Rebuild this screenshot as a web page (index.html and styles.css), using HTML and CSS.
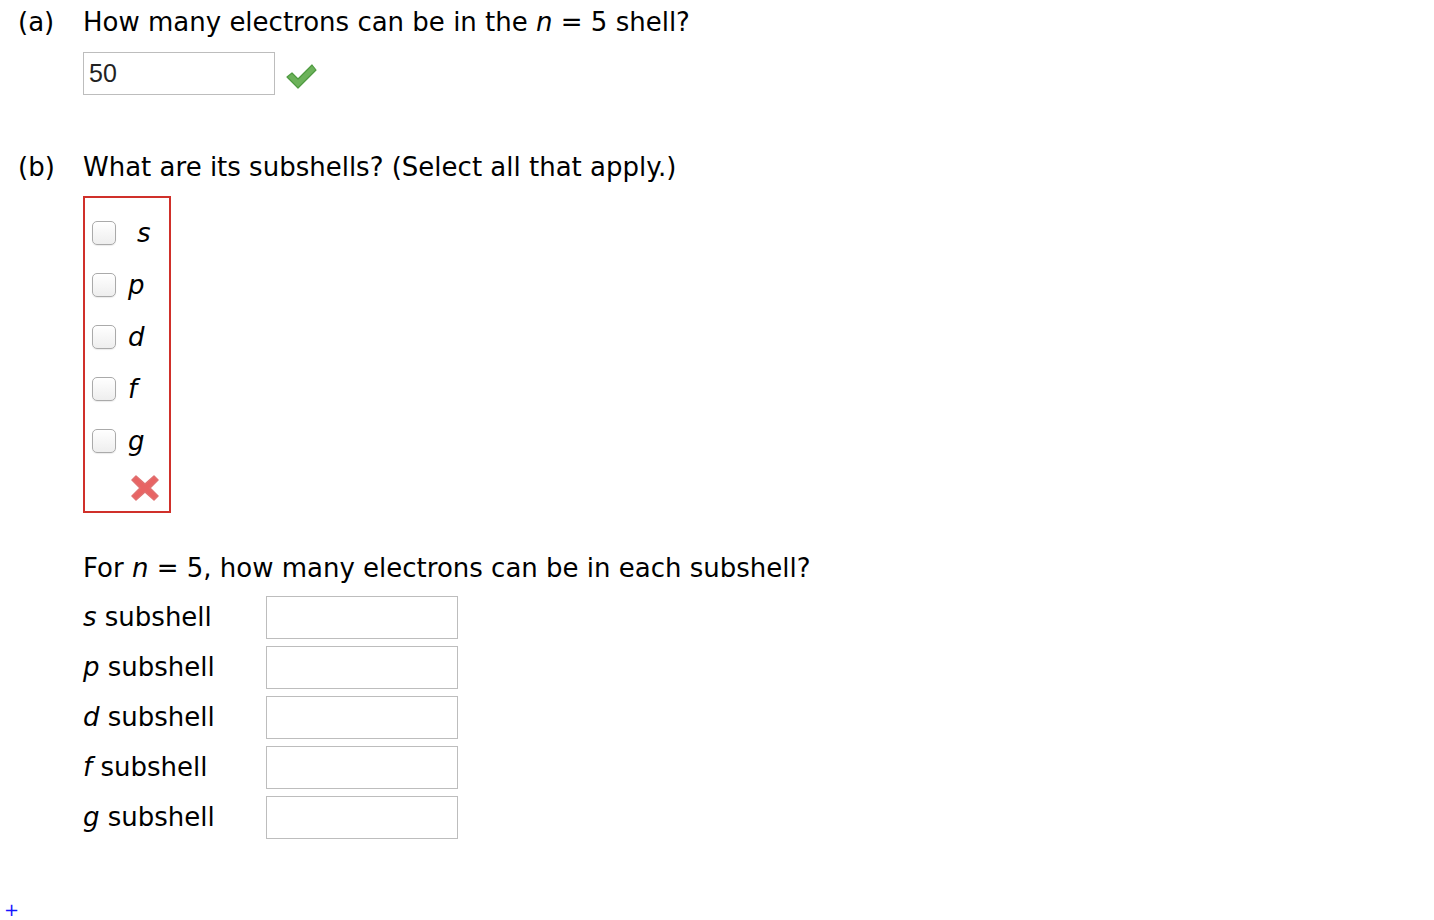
FILE: index.html
```html
<!DOCTYPE html>
<html>
<head>
  <meta charset="UTF-8"/>
  <title>Electron shells</title>
  <link rel="stylesheet" href="styles.css">
</head>
<body>
  <div class="part">
    <div class="part-label">(a)</div>
    <div class="part-body">
      <div class="question">How many electrons can be in the <i>n</i> = 5 shell?</div>
      <div class="answer-row">
        <input class="answer" type="text" value="50">
        <svg class="mark" width="32" height="28" viewBox="0 0 32 28">
          <path d="M2 15 L7 11 L13 17 L27 3 L31 8 L13 26 Z" fill="#6cb25a" stroke="#4e9a40" stroke-width="1.2" stroke-linejoin="round"/>
        </svg>
      </div>
    </div>
  </div>

  <div class="part part-b">
    <div class="part-label">(b)</div>
    <div class="part-body">
      <div class="question">What are its subshells? (Select all that apply.)</div>
      <div class="choices">
        <label class="choice"><span class="box"></span><i class="indent">s</i></label>
        <label class="choice"><span class="box"></span><i>p</i></label>
        <label class="choice"><span class="box"></span><i>d</i></label>
        <label class="choice"><span class="box"></span><i>f</i></label>
        <label class="choice"><span class="box"></span><i>g</i></label>
        <svg class="cross" width="28" height="26" viewBox="0 0 28 26">
          <path d="M5 1 L14 9 L23 1 L27 5 L19 13 L27 21 L23 25 L14 17 L5 25 L1 21 L9 13 L1 5 Z" fill="#e86464" stroke="#e07070" stroke-width="1.5" stroke-linejoin="round"/>
        </svg>
      </div>

      <div class="question follow">For <i>n</i> = 5, how many electrons can be in each subshell?</div>
      <div class="subshells">
        <div class="sub-label"><i>s</i> subshell</div><input class="answer" type="text">
        <div class="sub-label"><i>p</i> subshell</div><input class="answer" type="text">
        <div class="sub-label"><i>d</i> subshell</div><input class="answer" type="text">
        <div class="sub-label"><i>f</i> subshell</div><input class="answer" type="text">
        <div class="sub-label"><i>g</i> subshell</div><input class="answer" type="text">
      </div>
    </div>
  </div>

  <div class="plus">+</div>
</body>
</html>
```

FILE: styles.css
```css
html, body {
  margin: 0;
  padding: 0;
  border: 0;
}
body {
  background-color: #fff;
  color: #000;
  font-family: "DejaVu Sans", Verdana, sans-serif;
  font-size: 26px;
  position: relative;
  width: 1434px;
  height: 920px;
  overflow: hidden;
}

.part {
  display: flex;
  padding-left: 18px;
}
.part-label {
  width: 65px;
  flex: 0 0 auto;
  line-height: 44px;
}
.question {
  line-height: 44px;
}

.answer-row {
  display: flex;
  align-items: center;
  gap: 10px;
  margin-top: 8px;
}
.answer {
  box-sizing: border-box;
  width: 192px;
  height: 43px;
  border: 1px solid #bdbdbd;
  margin: 0;
  padding: 0 5px;
  font-family: "Liberation Sans", Arial, sans-serif;
  font-size: 25px;
  color: #222;
  outline: none;
}
.mark {
  margin-top: 4px;
}

.part-b {
  margin-top: 50px;
}

.choices {
  box-sizing: border-box;
  width: 88px;
  margin-top: 7px;
  border: 2px solid #d0302a;
  padding: 9px 0 10px 7px;
  display: flex;
  flex-direction: column;
}
.choice {
  display: flex;
  align-items: center;
  height: 52px;
  gap: 12px;
}
.box {
  box-sizing: border-box;
  width: 24px;
  height: 24px;
  border: 1.5px solid #aaa;
  border-radius: 5px;
  background: linear-gradient(#fff, #eee);
  box-shadow: inset 0 1px 1px #fff, 0 1px 1px rgba(0,0,0,0.08);
  flex: 0 0 auto;
}
.choice i {
  font-size: 26px;
  line-height: 1;
}
.choice .indent {
  margin-left: 9px;
}
.cross {
  margin: 8px 0 0 39px;
}

.follow {
  margin-top: 33px;
}
.subshells {
  display: grid;
  grid-template-columns: 183px 192px;
  row-gap: 7px;
  margin-top: 6px;
  align-items: center;
}
.sub-label {
  line-height: 43px;
}

.plus {
  position: absolute;
  left: 4px;
  top: 902px;
  color: #1414ff;
  font-size: 18px;
  line-height: 16px;
}
```
